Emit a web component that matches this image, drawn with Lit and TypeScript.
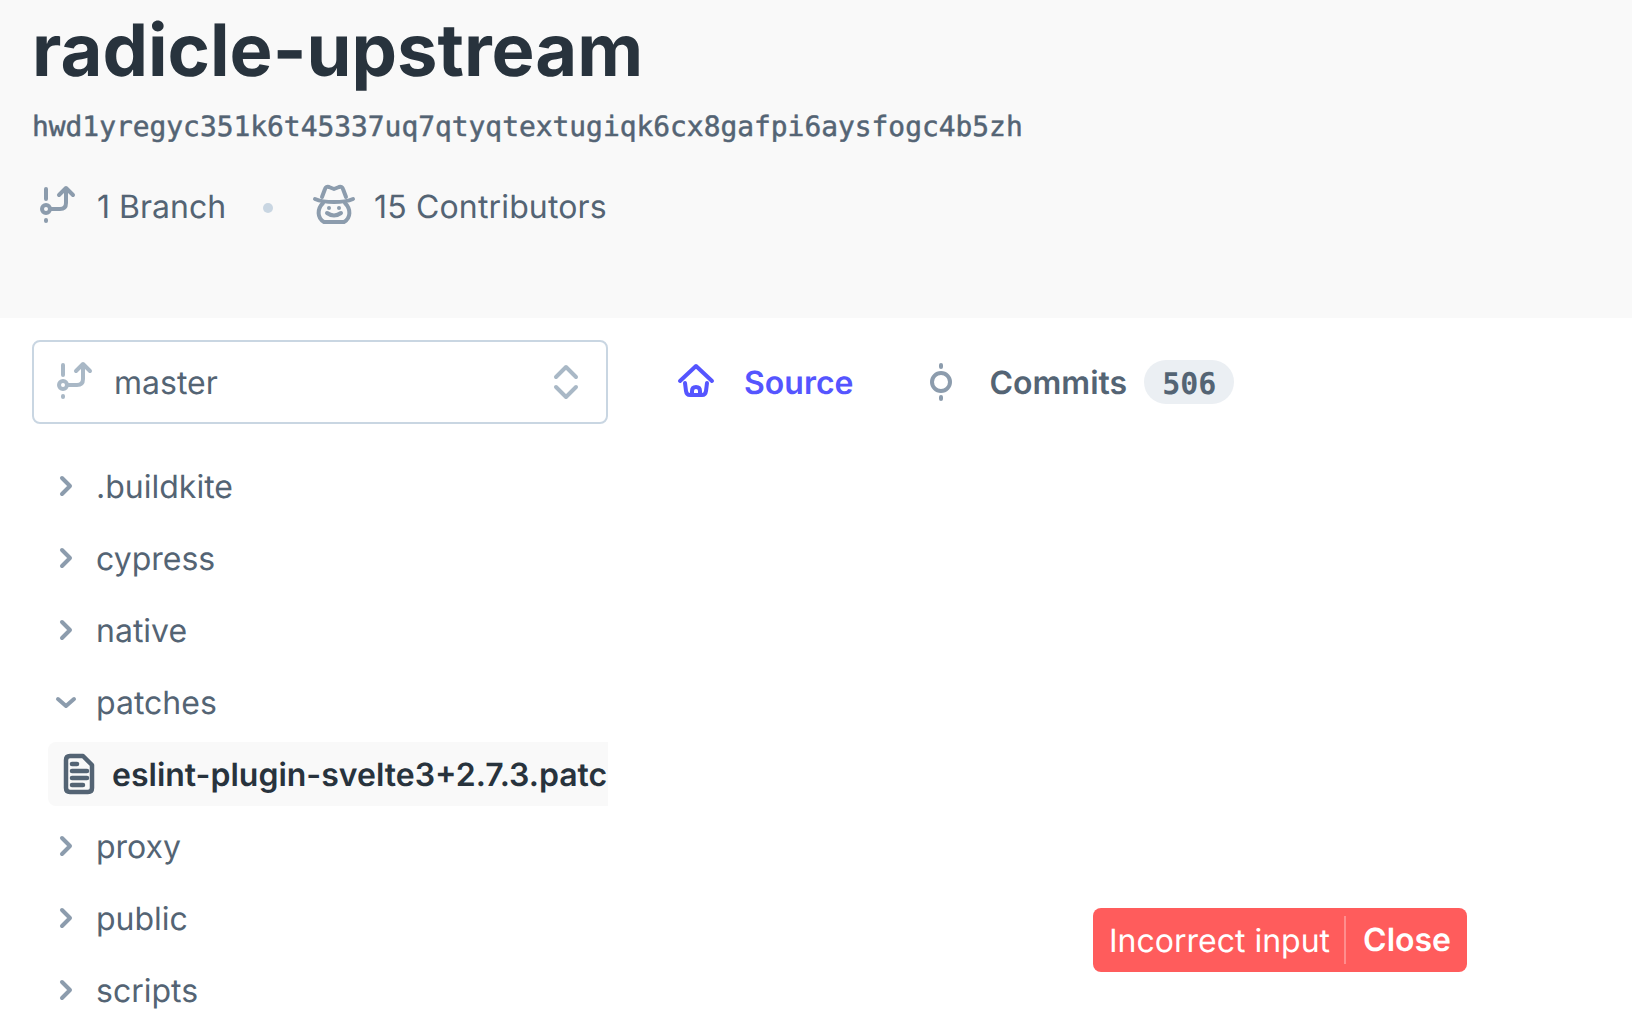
/**
 * Repository source browser: header, revision selector, file tree, tabs and a toast
 */

import { LitElement, html, css, svg } from "lit";
import { customElement } from "lit/decorators.js";

const branchIcon = svg`
  <path d="M14 7v10M14 38v1M18 27h10q6 0 6-6V8M27 13l7-7 7 7" />
  <circle cx="14" cy="27" r="4" />
`;

const hatIcon = svg`
  <path d="M5 17q7 3 19 3t19-3" />
  <path d="M12 15l3-8q1-3 4-2l5 2 5-2q3-1 4 2l3 8" />
  <path d="M13 21c-6 6-6 15 1 19h20c7-4 7-13 1-19" />
  <circle class="solid" cx="19" cy="26" r="2" />
  <circle class="solid" cx="29" cy="26" r="2" />
  <path d="M17 31q7 5 14 0" />
`;

const homeIcon = svg`
  <path d="M8 23L24 8l16 15" />
  <path d="M13 25l1 8q.5 4 4 4h12q3.500 0 4-4l1-8" />
  <path d="M20 37v-4q0-4 4-4t4 4v4" />
`;

const commitIcon = svg`
  <circle cx="24" cy="24" r="9" />
  <path d="M24 7v2M24 39v2" />
`;

const fileIcon = svg`
  <path d="M14 6h13l9 9v23q0 4-4 4H14q-4 0-4-4V10q0-4 4-4z" />
  <path d="M16 14h5M16 21h15M16 28h15M16 35h11" />
`;

const icon = (body: unknown, cls = "") =>
  html`<svg class="icon ${cls}" viewBox="0 0 48 48">${body}</svg>`;

const folders = [
  { name: ".buildkite" },
  { name: "cypress" },
  { name: "native" },
  { name: "patches", open: true, file: "eslint-plugin-svelte3+2.7.3.patch" },
  { name: "proxy" },
  { name: "public" },
  { name: "scripts" },
  { name: "ui" },
];

@customElement("app-root")
export class AppRoot extends LitElement {
  static override styles = css`
    :host {
      display: block;
      position: relative;
      height: 1012px;
      overflow: hidden;
      background: #fff;
      font-family: Inter, sans-serif;
      font-size: 32px;
      color: #546474;
      text-rendering: geometricPrecision;
    }

    .icon {
      width: 48px;
      height: 48px;
      flex: none;
      fill: none;
      stroke: #8c9cad;
      stroke-width: 4;
      stroke-linecap: round;
      stroke-linejoin: round;
    }

    .icon .solid {
      fill: #8c9cad;
      stroke: none;
    }

    .header {
      height: 318px;
      box-sizing: border-box;
      padding: 13px 32px 0;
      background: #f9f9f9;
    }

    .title {
      margin: 0;
      font-size: 72.25px;
      line-height: 76px;
      font-weight: 700;
      color: #28333d;
    }

    .hash {
      margin-top: 20px;
      font-family: "DejaVu Sans Mono", monospace;
      font-size: 27.9px;
      line-height: 36px;
      -webkit-text-stroke: 0.5px #546474;
    }

    .stats {
      display: flex;
      align-items: center;
      height: 48px;
      margin-top: 37px;
    }

    .stat-label {
      margin-left: 17px;
    }

    .stat-dot {
      width: 10px;
      height: 10px;
      margin: 4px 37px 0 37px;
      border-radius: 50%;
      background: #c9d6e2;
    }

    .stat-hat + .stat-label {
      margin-left: 16px;
      letter-spacing: 0.15px;
    }

    .body {
      display: flex;
      padding: 22px 0 0 32px;
    }

    .side {
      width: 576px;
      flex: none;
    }

    .select {
      display: flex;
      align-items: center;
      box-sizing: border-box;
      height: 84px;
      padding: 0 16px 0 15px;
      border: 2px solid #c9d6e2;
      border-radius: 8px;
    }

    .select .icon {
      stroke: #a9b8c6;
    }

    .select-name {
      flex: 1;
      margin-left: 17px;
    }

    .select .updown {
      transform: translateY(2px);
    }

    .tree {
      margin-top: 26px;
    }

    .row {
      display: flex;
      align-items: center;
      height: 72px;
    }

    .chevron {
      width: 40px;
      height: 40px;
      margin: 0 10px 0 14px;
    }

    .file {
      display: flex;
      align-items: center;
      height: 64px;
      margin: 4px 0 4px 16px;
      padding-left: 8px;
      border-radius: 8px 0 0 8px;
      background: #f9f9f9;
      font-weight: 600;
      color: #28333d;
      white-space: nowrap;
      overflow: hidden;
    }

    .file .icon {
      margin-right: 8px;
      stroke: #546474;
      stroke-width: 4.5;
    }

    .tabs {
      display: flex;
      align-items: center;
      height: 84px;
      margin-left: 64px;
      font-weight: 600;
    }

    .tab {
      display: flex;
      align-items: center;
      gap: 24px;
      margin-right: 64px;
    }

    .tab.active {
      color: #5555ff;
    }

    .tab.active .icon {
      stroke: #5555ff;
    }

    .count {
      margin-left: -7px;
      padding: 0 18px;
      height: 44px;
      line-height: 49px;
      border-radius: 22px;
      background: #ebeff3;
      font-family: "DejaVu Sans Mono", monospace;
      font-size: 30px;
      font-weight: 700;
    }

    .toast {
      position: absolute;
      left: 1093px;
      top: 908px;
      display: flex;
      align-items: center;
      height: 64px;
      padding: 0 16px;
      border-radius: 8px;
      background: #ff5c5c;
      color: #fff;
    }

    .toast-close {
      margin-left: 14px;
      padding-left: 17px;
      line-height: 48px;
      border-left: 2px solid rgba(255, 255, 255, 0.3);
      font-weight: 600;
    }
  `;

  private renderFolder(folder: { name: string; open?: boolean; file?: string }) {
    return html`
      <div class="row">
        <svg class="icon chevron" viewBox="0 0 40 40">
          <path d=${folder.open ? "M12 17l8 7 8-7" : "M16 12l8 8-8 8"} />
        </svg>
        ${folder.name}
      </div>
      ${folder.file
        ? html`<div class="file">${icon(fileIcon)}${folder.file}</div>`
        : null}
    `;
  }

  override render() {
    return html`
      <div class="header">
        <h1 class="title">radicle-upstream</h1>
        <div class="hash">hwd1yregyc351k6t45337uq7qtyqtextugiqk6cx8gafpi6aysfogc4b5zh</div>
        <div class="stats">
          ${icon(branchIcon)}
          <span class="stat-label">1 Branch</span>
          <span class="stat-dot"></span>
          ${icon(hatIcon, "stat-hat")}
          <span class="stat-label">15 Contributors</span>
        </div>
      </div>
      <div class="body">
        <div class="side">
          <div class="select">
            ${icon(branchIcon)}
            <span class="select-name">master</span>
            <svg class="icon updown" viewBox="0 0 48 48">
              <path d="M14 17l10-10 10 10M14 27l10 10 10-10" />
            </svg>
          </div>
          <div class="tree">${folders.map((f) => this.renderFolder(f))}</div>
        </div>
        <div class="tabs">
          <div class="tab active">${icon(homeIcon)}Source</div>
          <div class="tab">
            ${icon(commitIcon)}Commits
            <span class="count">506</span>
          </div>
        </div>
      </div>
      <div class="toast">
        Incorrect input
        <span class="toast-close">Close</span>
      </div>
    `;
  }
}

declare global {
  interface HTMLElementTagNameMap {
    "app-root": AppRoot;
  }
}
